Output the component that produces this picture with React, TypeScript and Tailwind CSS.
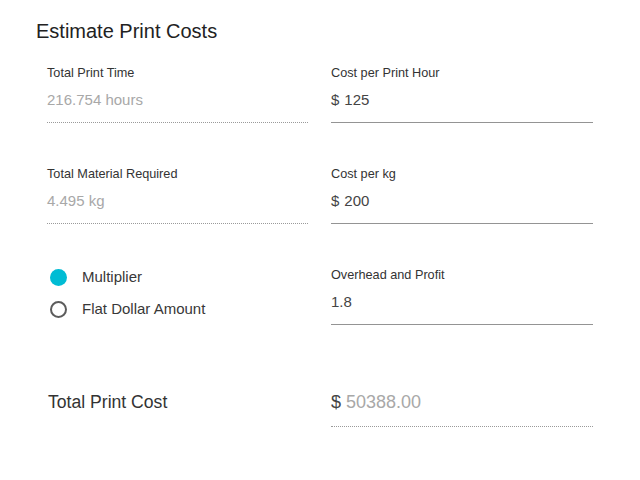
import React from 'react';

interface FieldProps {
  label: string;
  value: string;
  prefix?: string;
  disabled?: boolean;
}

const Field: React.FC<FieldProps> = ({ label, value, prefix, disabled }) => (
  <div className={`flex flex-col pt-[1px] pb-[12px] border-b ${disabled ? 'border-dotted border-[#9a9a9a]' : 'border-solid border-[#949494]'}`}>
    <span className="text-[12.7px] leading-4 text-[#333]">{label}</span>
    <span className={`mt-[9px] text-[15px] leading-5 ${disabled ? 'text-[#a8a8a8]' : 'text-[#444]'}`}>
      {prefix && <span className="mr-[5px]">{prefix}</span>}
      {value}
    </span>
  </div>
);

const Radio: React.FC<{ label: string; checked?: boolean }> = ({ label, checked }) => (
  <label className="flex items-center h-[22px] gap-[15px] pl-[3px]">
    {checked ? (
      <span className="w-[17px] h-[17px] rounded-full bg-[#00bcd4]" />
    ) : (
      <span className="w-[17px] h-[17px] rounded-full border-2 border-[#5c5c5c]" />
    )}
    <span className="text-[15px] text-[#383838]">{label}</span>
  </label>
);

export default function App() {
  return (
    <div className="w-[640px] h-[480px] bg-white overflow-hidden" style={{ fontFamily: '"Liberation Sans", Arial, sans-serif' }}>
      {/* Title */}
      <div className="pt-[19px] pl-[36px]">
        <h1 className="text-[20px] leading-6 text-[#222]">Estimate Print Costs</h1>
      </div>

      {/* Fields */}
      <div className="mt-[21px] ml-[47px] grid grid-cols-[261px_262px] gap-x-[23px] gap-y-[42px] items-start">
        <Field label="Total Print Time" value="216.754 hours" disabled />
        <Field label="Cost per Print Hour" prefix="$" value="125" />

        <Field label="Total Material Required" value="4.495 kg" disabled />
        <Field label="Cost per kg" prefix="$" value="200" />

        <div className="flex flex-col gap-[10px]">
          <Radio label="Multiplier" checked />
          <Radio label="Flat Dollar Amount" />
        </div>
        <Field label="Overhead and Profit" value="1.8" />
      </div>

      {/* Total */}
      <div className="mt-[65px] ml-[47px] grid grid-cols-[261px_262px] gap-x-[23px] items-start">
        <span className="pl-[1px] text-[17.6px] leading-6 text-[#333]">Total Print Cost</span>
        <div className="pb-[11px] border-b border-dotted border-[#9a9a9a]">
          <span className="text-[18px] leading-6">
            <span className="text-[#444] mr-[5px]">$</span>
            <span className="text-[#a8a8a8]">50388.00</span>
          </span>
        </div>
      </div>
    </div>
  );
}
